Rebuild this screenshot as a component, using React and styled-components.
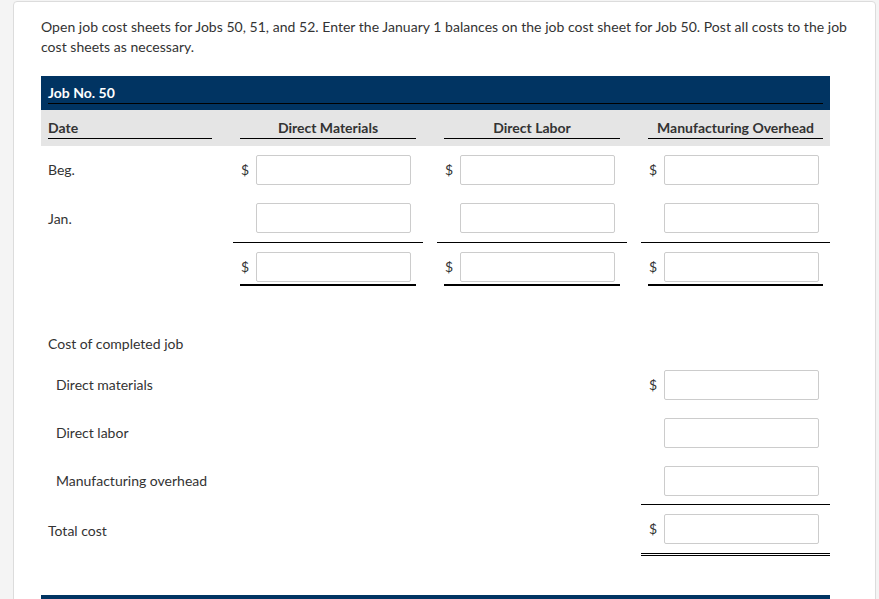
import React from "react";
import styled, { createGlobalStyle } from "styled-components";

const GlobalStyle = createGlobalStyle`
  body {
    margin: 0;
    background: #f4f4f4;
    font-family: Lato, "Open Sans", "Liberation Sans", sans-serif;
    color: #333;
  }
`;

const Card = styled.div`
  margin: 1px 0 0 13px;
  width: 807px;
  padding: 15px 27px 40px;
  background: #fff;
  border: 1px solid #dcdcdc;
  border-radius: 4px;
`;

const Intro = styled.p`
  margin: 0;
  font-size: 14px;
  line-height: 20px;
  letter-spacing: 0.03px;
  color: #333;
`;

const Sheet = styled.div`
  width: 789px;
  margin-top: ${(p) => p.$top}px;
`;

const SheetHead = styled.div`
  background: #013462;
  padding: 7px 7px 6px;
`;

const SheetTitle = styled.div`
  font-size: 14px;
  font-weight: 700;
  line-height: 20px;
  color: #fff;
  border-bottom: 1px solid #000;
`;

const Row = styled.div`
  display: grid;
  grid-template-columns: 178px 190px 190px 189px;
  column-gap: 14px;
  align-items: center;
  background: ${(p) => (p.$shade ? "#e5e5e5" : "transparent")};
  padding: ${(p) => (p.$shade ? "8px 0 7px" : "0")};
`;

const ColTitle = styled.div`
  margin: 0 7px;
  font-size: 14px;
  font-weight: 700;
  line-height: 20px;
  color: #333;
  text-align: ${(p) => (p.$left ? "left" : "center")};
  border-bottom: 1px solid #000;
`;

const Label = styled.div`
  font-size: 14px;
  line-height: 20px;
  color: #333;
  padding: ${(p) => p.$pad || "0 7px"};
  padding-left: ${(p) => (p.$indent ? 15 : 7)}px;
  grid-column: ${(p) => (p.$wide ? "1 / -1" : "auto")};
`;

const Cell = styled.div`
  align-self: stretch;
  padding: 9px 7px
    ${(p) => (p.$rule === "thick" ? 0 : p.$pb ?? 9)}px;
  border-bottom: ${(p) =>
    p.$rule === "single"
      ? "1px solid #000"
      : p.$rule === "double"
      ? "3px double #000"
      : "none"};
`;

const Amount = styled.div`
  display: flex;
  align-items: center;
  padding-right: 5px;
  ${(p) =>
    p.$thick &&
    `
    padding-bottom: 2px;
    border-bottom: 2px solid #000;
  `}
`;

const Dollar = styled.span`
  width: 15px;
  flex: none;
  font-size: 14px;
  line-height: 20px;
  color: #333;
  padding-left: 1px;
`;

const Field = styled.input`
  box-sizing: border-box;
  width: 155px;
  height: 30px;
  border: 1px solid #ccc;
  border-radius: 2px;
  background: #fff;
  font: inherit;
  outline: none;
`;

const Money = ({ dollar, thick }) => (
  <Amount $thick={thick}>
    <Dollar>{dollar ? "$" : ""}</Dollar>
    <Field type="text" />
  </Amount>
);

const Empty = styled.div``;

const JobSheet = ({ job, top }) => (
  <Sheet $top={top}>
    <SheetHead>
      <SheetTitle>Job No. {job}</SheetTitle>
    </SheetHead>
    <Row $shade>
      <ColTitle $left>Date</ColTitle>
      <ColTitle>Direct Materials</ColTitle>
      <ColTitle>Direct Labor</ColTitle>
      <ColTitle>Manufacturing Overhead</ColTitle>
    </Row>

    <Row>
      <Label>Beg.</Label>
      {[0, 1, 2].map((i) => (
        <Cell key={i}>
          <Money dollar />
        </Cell>
      ))}
    </Row>
    <Row>
      <Label>Jan.</Label>
      {[0, 1, 2].map((i) => (
        <Cell key={i} $rule="single">
          <Money />
        </Cell>
      ))}
    </Row>
    <Row>
      <Empty />
      {[0, 1, 2].map((i) => (
        <Cell key={i} $rule="thick">
          <Money dollar thick />
        </Cell>
      ))}
    </Row>

    <Row>
      <Label $wide $pad="48px 7px 7px">
        Cost of completed job
      </Label>
    </Row>
    <Row>
      <Label $indent>Direct materials</Label>
      <Empty />
      <Empty />
      <Cell>
        <Money dollar />
      </Cell>
    </Row>
    <Row>
      <Label $indent>Direct labor</Label>
      <Empty />
      <Empty />
      <Cell>
        <Money />
      </Cell>
    </Row>
    <Row>
      <Label $indent>Manufacturing overhead</Label>
      <Empty />
      <Empty />
      <Cell $rule="single" $pb={8}>
        <Money />
      </Cell>
    </Row>
    <Row>
      <Label>Total cost</Label>
      <Empty />
      <Empty />
      <Cell $rule="double">
        <Money dollar />
      </Cell>
    </Row>
  </Sheet>
);

export default function App() {
  return (
    <>
      <GlobalStyle />
      <Card>
        <Intro>
          Open job cost sheets for Jobs 50, 51, and 52. Enter the January 1
          balances on the job cost sheet for Job 50. Post all costs to the job
          cost sheets as necessary.
        </Intro>
        <JobSheet job={50} top={19} />
        <JobSheet job={51} top={39} />
        <JobSheet job={52} top={39} />
      </Card>
    </>
  );
}
